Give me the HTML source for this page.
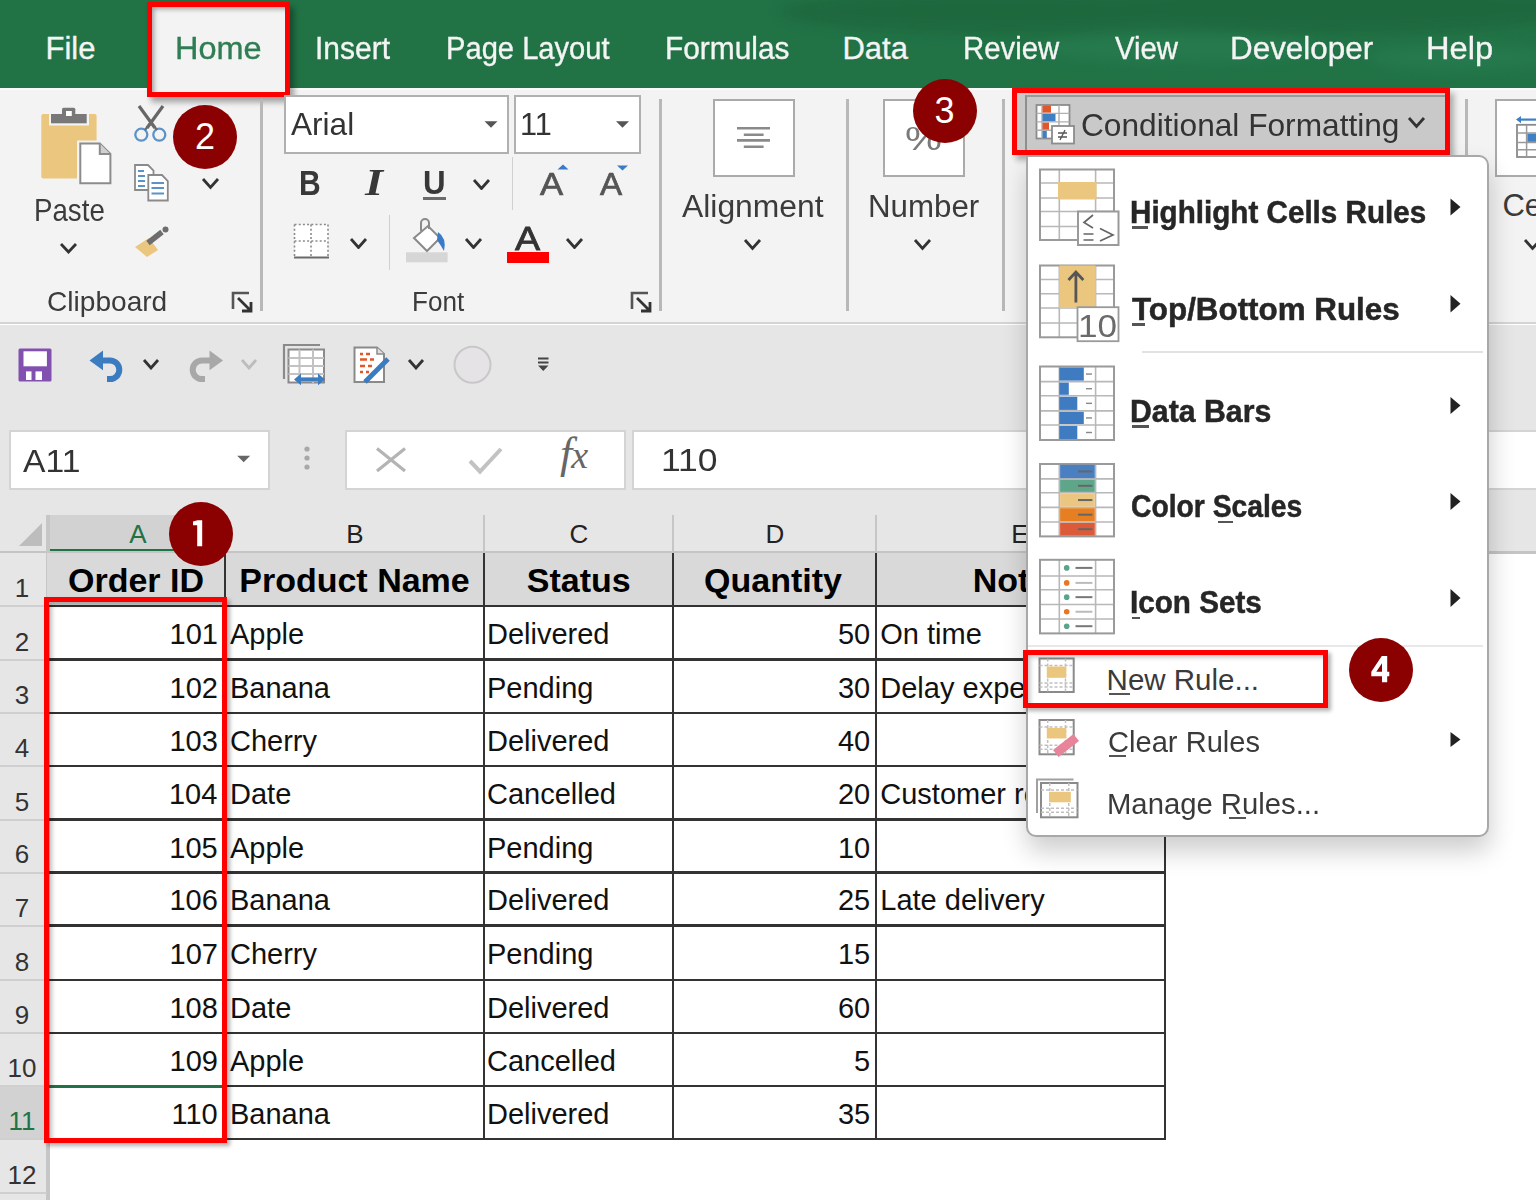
<!DOCTYPE html>
<html><head><meta charset="utf-8"><style>
html,body{margin:0;padding:0;}
body{width:1536px;height:1200px;overflow:hidden;position:relative;background:#fff;font-family:"Liberation Sans",sans-serif;}
body>div,body>svg{position:absolute;box-sizing:border-box;}
.t{white-space:nowrap;}
</style></head><body>
<div style="left:0px;top:0px;width:1536px;height:88px;background:#217346;"></div>
<svg style="left:0;top:0" width="1536" height="1200" viewBox="0 0 1536 1200"><defs><filter id="bl" x="-50%" y="-50%" width="200%" height="200%"><feGaussianBlur stdDeviation="6"/></filter></defs>
<g filter="url(#bl)" opacity="0.5">
<ellipse cx="1000" cy="12" rx="220" ry="22" fill="#1b5e38"/>
<ellipse cx="1330" cy="8" rx="260" ry="26" fill="#1b5e38"/>
<ellipse cx="1180" cy="48" rx="140" ry="14" fill="#2a8052"/>
<ellipse cx="1460" cy="58" rx="90" ry="12" fill="#2a8052"/>
</g></svg>
<div style="left:0px;top:88px;width:1536px;height:235px;background:#f3f3f3;"></div>
<div style="left:0px;top:88px;width:1536px;height:2px;background:#fafafa;"></div>
<div style="left:0px;top:322.3px;width:1536px;height:2.1999999999999886px;background:#d4d4d4;"></div>
<div style="left:0px;top:324.5px;width:1536px;height:228.5px;background:#e6e6e6;"></div>
<div style="left:152px;top:7px;width:133px;height:85px;background:#f3f3f3;box-shadow:inset 4px 4px 5px -2px rgba(0,0,0,.35);"></div>
<div class="t" style="left:45.46px;transform-origin:0 0;top:33.36px;font-size:31px;line-height:31px;font-weight:400;color:#f4f4f4;-webkit-text-stroke:0.35px #f4f4f4;">File</div>
<div class="t" style="left:315.24px;transform-origin:0 0;top:33.36px;font-size:31px;line-height:31px;font-weight:400;color:#f4f4f4;transform:scaleX(0.9669);-webkit-text-stroke:0.35px #f4f4f4;">Insert</div>
<div class="t" style="left:445.61px;transform-origin:0 0;top:33.36px;font-size:31px;line-height:31px;font-weight:400;color:#f4f4f4;transform:scaleX(0.9397);-webkit-text-stroke:0.35px #f4f4f4;">Page Layout</div>
<div class="t" style="left:664.55px;transform-origin:0 0;top:33.36px;font-size:31px;line-height:31px;font-weight:400;color:#f4f4f4;transform:scaleX(0.9638);-webkit-text-stroke:0.35px #f4f4f4;">Formulas</div>
<div class="t" style="left:842.46px;transform-origin:0 0;top:33.36px;font-size:31px;line-height:31px;font-weight:400;color:#f4f4f4;-webkit-text-stroke:0.35px #f4f4f4;">Data</div>
<div class="t" style="left:962.59px;transform-origin:0 0;top:33.36px;font-size:31px;line-height:31px;font-weight:400;color:#f4f4f4;transform:scaleX(0.9476);-webkit-text-stroke:0.35px #f4f4f4;">Review</div>
<div class="t" style="left:1114.88px;transform-origin:0 0;top:33.36px;font-size:31px;line-height:31px;font-weight:400;color:#f4f4f4;transform:scaleX(0.9461);-webkit-text-stroke:0.35px #f4f4f4;">View</div>
<div class="t" style="left:1230.43px;transform-origin:0 0;top:33.36px;font-size:31px;line-height:31px;font-weight:400;color:#f4f4f4;transform:scaleX(1.0126);-webkit-text-stroke:0.35px #f4f4f4;">Developer</div>
<div class="t" style="left:1426.33px;transform-origin:0 0;top:33.36px;font-size:31px;line-height:31px;font-weight:400;color:#f4f4f4;transform:scaleX(1.0513);-webkit-text-stroke:0.35px #f4f4f4;">Help</div>
<div class="t" style="left:174.84px;transform-origin:0 0;top:33.36px;font-size:31px;line-height:31px;font-weight:400;color:#2f7d52;transform:scaleX(1.0473);-webkit-text-stroke:0.35px #2f7d52;">Home</div>
<div style="left:147px;top:2px;width:143px;height:95px;border:5px solid #ff0000;box-shadow:4px 5px 6px rgba(0,0,0,.35);"></div>
<div style="left:259.5px;top:99px;width:3.0px;height:212px;background:#b8b8b8;"></div>
<div style="left:658.5px;top:99px;width:3.0px;height:212px;background:#b8b8b8;"></div>
<div style="left:845.5px;top:99px;width:3.0px;height:212px;background:#b8b8b8;"></div>
<div style="left:1001.5px;top:99px;width:3.0px;height:212px;background:#b8b8b8;"></div>
<div style="left:1464.5px;top:99px;width:3.0px;height:212px;background:#b8b8b8;"></div>
<div style="left:0px;top:515px;width:1536px;height:38px;background:#e6e6e6;"></div>
<div style="left:47px;top:515px;width:178px;height:38px;background:#d2d2d2;"></div>
<div style="left:47px;top:549px;width:178px;height:4px;background:#217346;"></div>
<div style="left:0px;top:551px;width:1536px;height:3px;background:#c4c4c4;"></div>
<div style="left:224px;top:515px;width:2px;height:37px;background:#c6c6c6;"></div>
<div style="left:483px;top:515px;width:2px;height:37px;background:#c6c6c6;"></div>
<div style="left:672px;top:515px;width:2px;height:37px;background:#c6c6c6;"></div>
<div style="left:875px;top:515px;width:2px;height:37px;background:#c6c6c6;"></div>
<div style="left:1164px;top:515px;width:2px;height:37px;background:#c6c6c6;"></div>
<svg style="left:19px;top:523px;" width="24" height="24" viewBox="0 0 24 24"><path d="M23 0 L23 23 L0 23 Z" fill="#bdbdbd"/></svg>
<div class="t" style="left:138.00px;top:521.39px;font-size:26px;line-height:26px;font-weight:400;color:#217346;transform:translateX(-50%) scaleX(1.0000);">A</div>
<div class="t" style="left:355.00px;top:521.39px;font-size:26px;line-height:26px;font-weight:400;color:#222;transform:translateX(-50%) scaleX(1.0000);">B</div>
<div class="t" style="left:579.00px;top:521.39px;font-size:26px;line-height:26px;font-weight:400;color:#222;transform:translateX(-50%) scaleX(1.0000);">C</div>
<div class="t" style="left:775.00px;top:521.39px;font-size:26px;line-height:26px;font-weight:400;color:#222;transform:translateX(-50%) scaleX(1.0000);">D</div>
<div class="t" style="left:1020.00px;top:521.39px;font-size:26px;line-height:26px;font-weight:400;color:#222;transform:translateX(-50%) scaleX(1.0000);">E</div>
<div style="left:0px;top:553px;width:47px;height:647px;background:#e6e6e6;"></div>
<div style="left:0px;top:1086px;width:47px;height:53px;background:#d2d2d2;"></div>
<div style="left:46px;top:515px;width:3.5px;height:685px;background:#c6c6c6;"></div>
<div style="left:0px;top:605px;width:47px;height:2px;background:#cfcfcf;"></div>
<div style="left:0px;top:658.6px;width:47px;height:2.0px;background:#cfcfcf;"></div>
<div style="left:0px;top:712px;width:47px;height:2px;background:#cfcfcf;"></div>
<div style="left:0px;top:765px;width:47px;height:2px;background:#cfcfcf;"></div>
<div style="left:0px;top:818.7px;width:47px;height:2.0px;background:#cfcfcf;"></div>
<div style="left:0px;top:871.5px;width:47px;height:2.0px;background:#cfcfcf;"></div>
<div style="left:0px;top:924.7px;width:47px;height:2.0px;background:#cfcfcf;"></div>
<div style="left:0px;top:978.9px;width:47px;height:2.0px;background:#cfcfcf;"></div>
<div style="left:0px;top:1032px;width:47px;height:2px;background:#cfcfcf;"></div>
<div style="left:0px;top:1085px;width:47px;height:2px;background:#cfcfcf;"></div>
<div style="left:0px;top:1138px;width:47px;height:2px;background:#cfcfcf;"></div>
<div style="left:0px;top:1192px;width:47px;height:2px;background:#cfcfcf;"></div>
<div class="t" style="left:22.00px;top:574.99px;font-size:26px;line-height:26px;font-weight:400;color:#333;transform:translateX(-50%) scaleX(1.0000);">1</div>
<div class="t" style="left:22.00px;top:628.59px;font-size:26px;line-height:26px;font-weight:400;color:#333;transform:translateX(-50%) scaleX(1.0000);">2</div>
<div class="t" style="left:22.00px;top:681.99px;font-size:26px;line-height:26px;font-weight:400;color:#333;transform:translateX(-50%) scaleX(1.0000);">3</div>
<div class="t" style="left:22.00px;top:734.99px;font-size:26px;line-height:26px;font-weight:400;color:#333;transform:translateX(-50%) scaleX(1.0000);">4</div>
<div class="t" style="left:22.00px;top:788.69px;font-size:26px;line-height:26px;font-weight:400;color:#333;transform:translateX(-50%) scaleX(1.0000);">5</div>
<div class="t" style="left:22.00px;top:841.49px;font-size:26px;line-height:26px;font-weight:400;color:#333;transform:translateX(-50%) scaleX(1.0000);">6</div>
<div class="t" style="left:22.00px;top:894.69px;font-size:26px;line-height:26px;font-weight:400;color:#333;transform:translateX(-50%) scaleX(1.0000);">7</div>
<div class="t" style="left:22.00px;top:948.89px;font-size:26px;line-height:26px;font-weight:400;color:#333;transform:translateX(-50%) scaleX(1.0000);">8</div>
<div class="t" style="left:22.00px;top:1001.99px;font-size:26px;line-height:26px;font-weight:400;color:#333;transform:translateX(-50%) scaleX(1.0000);">9</div>
<div class="t" style="left:22.00px;top:1054.99px;font-size:26px;line-height:26px;font-weight:400;color:#333;transform:translateX(-50%) scaleX(1.0000);">10</div>
<div class="t" style="left:22.00px;top:1107.99px;font-size:26px;line-height:26px;font-weight:400;color:#217346;transform:translateX(-50%) scaleX(1.0000);">11</div>
<div class="t" style="left:22.00px;top:1161.99px;font-size:26px;line-height:26px;font-weight:400;color:#333;transform:translateX(-50%) scaleX(1.0000);">12</div>
<div style="left:47px;top:553px;width:1118px;height:53px;background:#d9d9d9;"></div>
<div style="left:47px;top:604.7px;width:1119px;height:2.599999999999909px;background:#333;"></div>
<div style="left:47px;top:658.3000000000001px;width:1119px;height:2.599999999999909px;background:#333;"></div>
<div style="left:47px;top:711.7px;width:1119px;height:2.599999999999909px;background:#333;"></div>
<div style="left:47px;top:764.7px;width:1119px;height:2.599999999999909px;background:#333;"></div>
<div style="left:47px;top:818.4000000000001px;width:1119px;height:2.599999999999909px;background:#333;"></div>
<div style="left:47px;top:871.2px;width:1119px;height:2.599999999999909px;background:#333;"></div>
<div style="left:47px;top:924.4000000000001px;width:1119px;height:2.599999999999909px;background:#333;"></div>
<div style="left:47px;top:978.6px;width:1119px;height:2.599999999999909px;background:#333;"></div>
<div style="left:47px;top:1031.7px;width:1119px;height:2.599999999999909px;background:#333;"></div>
<div style="left:47px;top:1084.7px;width:1119px;height:2.599999999999909px;background:#333;"></div>
<div style="left:47px;top:1137.7px;width:1119px;height:2.599999999999909px;background:#333;"></div>
<div style="left:223.7px;top:553px;width:2.6000000000000227px;height:587px;background:#333;"></div>
<div style="left:482.7px;top:553px;width:2.6000000000000227px;height:587px;background:#333;"></div>
<div style="left:671.7px;top:553px;width:2.599999999999909px;height:587px;background:#333;"></div>
<div style="left:874.7px;top:553px;width:2.599999999999909px;height:587px;background:#333;"></div>
<div style="left:1163.7px;top:553px;width:2.599999999999909px;height:587px;background:#333;"></div>
<div class="t" style="left:136.00px;top:562.72px;font-size:34px;line-height:34px;font-weight:700;color:#000;transform:translateX(-50%) scaleX(1.0000);">Order ID</div>
<div class="t" style="left:354.50px;top:562.72px;font-size:34px;line-height:34px;font-weight:700;color:#000;transform:translateX(-50%) scaleX(1.0000);">Product Name</div>
<div class="t" style="left:578.80px;top:562.72px;font-size:34px;line-height:34px;font-weight:700;color:#000;transform:translateX(-50%) scaleX(1.0000);">Status</div>
<div class="t" style="left:773.00px;top:562.72px;font-size:34px;line-height:34px;font-weight:700;color:#000;transform:translateX(-50%) scaleX(1.0000);">Quantity</div>
<div class="t" style="left:1020.00px;top:562.72px;font-size:34px;line-height:34px;font-weight:700;color:#000;transform:translateX(-50%) scaleX(1.0000);">Notes</div>
<div class="t" style="right:1318.07px;transform-origin:100% 0;top:619.95px;font-size:29px;line-height:29px;font-weight:400;color:#111;">101</div>
<div class="t" style="left:230.00px;transform-origin:0 0;top:619.95px;font-size:29px;line-height:29px;font-weight:400;color:#111;">Apple</div>
<div class="t" style="left:487.00px;transform-origin:0 0;top:619.95px;font-size:29px;line-height:29px;font-weight:400;color:#111;">Delivered</div>
<div class="t" style="right:665.86px;transform-origin:100% 0;top:619.95px;font-size:29px;line-height:29px;font-weight:400;color:#111;">50</div>
<div class="t" style="left:880.30px;transform-origin:0 0;top:619.95px;font-size:29px;line-height:29px;font-weight:400;color:#111;">On time</div>
<div class="t" style="right:1318.04px;transform-origin:100% 0;top:673.55px;font-size:29px;line-height:29px;font-weight:400;color:#111;">102</div>
<div class="t" style="left:230.00px;transform-origin:0 0;top:673.55px;font-size:29px;line-height:29px;font-weight:400;color:#111;">Banana</div>
<div class="t" style="left:487.00px;transform-origin:0 0;top:673.55px;font-size:29px;line-height:29px;font-weight:400;color:#111;">Pending</div>
<div class="t" style="right:665.86px;transform-origin:100% 0;top:673.55px;font-size:29px;line-height:29px;font-weight:400;color:#111;">30</div>
<div class="t" style="left:880.30px;transform-origin:0 0;top:673.55px;font-size:29px;line-height:29px;font-weight:400;color:#111;">Delay expected</div>
<div class="t" style="right:1318.21px;transform-origin:100% 0;top:726.95px;font-size:29px;line-height:29px;font-weight:400;color:#111;">103</div>
<div class="t" style="left:230.00px;transform-origin:0 0;top:726.95px;font-size:29px;line-height:29px;font-weight:400;color:#111;">Cherry</div>
<div class="t" style="left:487.00px;transform-origin:0 0;top:726.95px;font-size:29px;line-height:29px;font-weight:400;color:#111;">Delivered</div>
<div class="t" style="right:665.86px;transform-origin:100% 0;top:726.95px;font-size:29px;line-height:29px;font-weight:400;color:#111;">40</div>
<div class="t" style="right:1318.65px;transform-origin:100% 0;top:779.95px;font-size:29px;line-height:29px;font-weight:400;color:#111;">104</div>
<div class="t" style="left:230.00px;transform-origin:0 0;top:779.95px;font-size:29px;line-height:29px;font-weight:400;color:#111;">Date</div>
<div class="t" style="left:487.00px;transform-origin:0 0;top:779.95px;font-size:29px;line-height:29px;font-weight:400;color:#111;">Cancelled</div>
<div class="t" style="right:665.86px;transform-origin:100% 0;top:779.95px;font-size:29px;line-height:29px;font-weight:400;color:#111;">20</div>
<div class="t" style="left:880.30px;transform-origin:0 0;top:779.95px;font-size:29px;line-height:29px;font-weight:400;color:#111;">Customer request</div>
<div class="t" style="right:1318.27px;transform-origin:100% 0;top:833.65px;font-size:29px;line-height:29px;font-weight:400;color:#111;">105</div>
<div class="t" style="left:230.00px;transform-origin:0 0;top:833.65px;font-size:29px;line-height:29px;font-weight:400;color:#111;">Apple</div>
<div class="t" style="left:487.00px;transform-origin:0 0;top:833.65px;font-size:29px;line-height:29px;font-weight:400;color:#111;">Pending</div>
<div class="t" style="right:665.86px;transform-origin:100% 0;top:833.65px;font-size:29px;line-height:29px;font-weight:400;color:#111;">10</div>
<div class="t" style="right:1318.21px;transform-origin:100% 0;top:886.45px;font-size:29px;line-height:29px;font-weight:400;color:#111;">106</div>
<div class="t" style="left:230.00px;transform-origin:0 0;top:886.45px;font-size:29px;line-height:29px;font-weight:400;color:#111;">Banana</div>
<div class="t" style="left:487.00px;transform-origin:0 0;top:886.45px;font-size:29px;line-height:29px;font-weight:400;color:#111;">Delivered</div>
<div class="t" style="right:665.77px;transform-origin:100% 0;top:886.45px;font-size:29px;line-height:29px;font-weight:400;color:#111;">25</div>
<div class="t" style="left:880.30px;transform-origin:0 0;top:886.45px;font-size:29px;line-height:29px;font-weight:400;color:#111;">Late delivery</div>
<div class="t" style="right:1318.04px;transform-origin:100% 0;top:939.65px;font-size:29px;line-height:29px;font-weight:400;color:#111;">107</div>
<div class="t" style="left:230.00px;transform-origin:0 0;top:939.65px;font-size:29px;line-height:29px;font-weight:400;color:#111;">Cherry</div>
<div class="t" style="left:487.00px;transform-origin:0 0;top:939.65px;font-size:29px;line-height:29px;font-weight:400;color:#111;">Pending</div>
<div class="t" style="right:665.77px;transform-origin:100% 0;top:939.65px;font-size:29px;line-height:29px;font-weight:400;color:#111;">15</div>
<div class="t" style="right:1318.24px;transform-origin:100% 0;top:993.85px;font-size:29px;line-height:29px;font-weight:400;color:#111;">108</div>
<div class="t" style="left:230.00px;transform-origin:0 0;top:993.85px;font-size:29px;line-height:29px;font-weight:400;color:#111;">Date</div>
<div class="t" style="left:487.00px;transform-origin:0 0;top:993.85px;font-size:29px;line-height:29px;font-weight:400;color:#111;">Delivered</div>
<div class="t" style="right:665.86px;transform-origin:100% 0;top:993.85px;font-size:29px;line-height:29px;font-weight:400;color:#111;">60</div>
<div class="t" style="right:1318.12px;transform-origin:100% 0;top:1046.95px;font-size:29px;line-height:29px;font-weight:400;color:#111;">109</div>
<div class="t" style="left:230.00px;transform-origin:0 0;top:1046.95px;font-size:29px;line-height:29px;font-weight:400;color:#111;">Apple</div>
<div class="t" style="left:487.00px;transform-origin:0 0;top:1046.95px;font-size:29px;line-height:29px;font-weight:400;color:#111;">Cancelled</div>
<div class="t" style="right:665.78px;transform-origin:100% 0;top:1046.95px;font-size:29px;line-height:29px;font-weight:400;color:#111;">5</div>
<div class="t" style="right:1318.36px;transform-origin:100% 0;top:1099.95px;font-size:29px;line-height:29px;font-weight:400;color:#111;">110</div>
<div class="t" style="left:230.00px;transform-origin:0 0;top:1099.95px;font-size:29px;line-height:29px;font-weight:400;color:#111;">Banana</div>
<div class="t" style="left:487.00px;transform-origin:0 0;top:1099.95px;font-size:29px;line-height:29px;font-weight:400;color:#111;">Delivered</div>
<div class="t" style="right:665.77px;transform-origin:100% 0;top:1099.95px;font-size:29px;line-height:29px;font-weight:400;color:#111;">35</div>
<div style="left:47px;top:1085px;width:178px;height:3px;background:#217346;"></div>
<div style="left:44px;top:597px;width:183px;height:546px;border:5px solid #ff0000;box-shadow:3px 3px 4px rgba(0,0,0,.3), inset 3px 3px 4px rgba(0,0,0,.25);"></div>
<svg style="left:0;top:0" width="1536" height="1200" viewBox="0 0 1536 1200">
<rect x="41.3" y="114" width="55.3" height="64.6" rx="2" fill="#ebc67e"/>
<rect x="49" y="112" width="40" height="13.5" fill="#f3f3f3"/>
<rect x="60" y="105.5" width="17.5" height="9" fill="#f3f3f3"/>
<rect x="51" y="114" width="35.7" height="9.3" fill="#787878"/>
<rect x="62" y="107.7" width="13.3" height="8" rx="1.5" fill="#787878"/>
<rect x="66" y="111" width="5.8" height="5" fill="#ffffff"/>
<rect x="77" y="140.5" width="36.5" height="46" fill="#f3f3f3"/>
<path d="M80.3 143.4 H99.8 L110.4 154 V183.2 H80.3 Z" fill="#fff" stroke="#8c8c8c" stroke-width="2"/>
<path d="M99.8 143.4 V154 H110.4" fill="#d0d0d0" stroke="#8c8c8c" stroke-width="2"/>
</svg>
<div class="t" style="left:34.13px;transform-origin:0 0;top:193.91px;font-size:32px;line-height:32px;font-weight:400;color:#3b3b3b;transform:scaleX(0.8651);">Paste</div>
<svg style="left:59.3px;top:242.4px;" width="19" height="12" viewBox="0 0 19 12"><path d="M2 2 L9.5 10 L17 2" fill="none" stroke="#333" stroke-width="2.8"/></svg>
<svg style="left:0;top:0" width="1536" height="1200" viewBox="0 0 1536 1200">
<path d="M139 106 L155 128 M163 106 L147 128" stroke="#666" stroke-width="3.2" fill="none"/>
<circle cx="141.3" cy="134.7" r="6" fill="none" stroke="#5b93c9" stroke-width="2.3"/>
<circle cx="159.3" cy="134.7" r="6" fill="none" stroke="#5b93c9" stroke-width="2.3"/>
<path d="M145 130 L151 122 L157 130" stroke="#6a6a6a" stroke-width="2.2" fill="none"/>
</svg>
<svg style="left:0;top:0" width="1536" height="1200" viewBox="0 0 1536 1200">
<path d="M135 165 H148 L153.5 170.5 V190 H135 Z" fill="#fff" stroke="#8a8a8a" stroke-width="1.8"/>
<path d="M138 171 H144 M138 176 H145 M138 181 H145 M138 186 H145" stroke="#5b93c9" stroke-width="1.8"/>
<path d="M148.3 175 H162 L167.8 181 V200.5 H148.3 Z" fill="#fff" stroke="#8a8a8a" stroke-width="1.8"/>
<path d="M151.5 183 H164 M151.5 188 H164 M151.5 193.5 H164" stroke="#5b93c9" stroke-width="1.8"/>
</svg>
<svg style="left:0;top:0" width="1536" height="1200" viewBox="0 0 1536 1200">
<path d="M135 247 L149 238 L158 250 L147 257 Z" fill="#ebc67e"/>
<path d="M148 243 L162 232" stroke="#6d6d6d" stroke-width="5.5"/>
<circle cx="165.5" cy="229.5" r="3" fill="#6d6d6d"/>
</svg>
<svg style="left:200.5px;top:177.3px;" width="19" height="12.5" viewBox="0 0 19 12.5"><path d="M2 2 L9.5 10.5 L17 2" fill="none" stroke="#333" stroke-width="2.8"/></svg>
<div class="t" style="left:46.57px;transform-origin:0 0;top:287.72px;font-size:27.5px;line-height:27.5px;font-weight:400;color:#3b3b3b;transform:scaleX(1.0215);">Clipboard</div>
<svg style="left:0;top:0" width="1536" height="1200" viewBox="0 0 1536 1200"><path d="M233 309 V293 H249" fill="none" stroke="#555" stroke-width="2.6"/>
<path d="M238 298 L250 310 M242 311 H251 V302" fill="none" stroke="#333" stroke-width="2.8"/></svg>
<div style="left:284px;top:95px;width:225px;height:59px;background:#fff;border:2px solid #b0b0b0;"></div>
<div style="left:514px;top:95px;width:127px;height:59px;background:#fff;border:2px solid #b0b0b0;"></div>
<div class="t" style="left:290.94px;transform-origin:0 0;top:108.31px;font-size:32px;line-height:32px;font-weight:400;color:#333;transform:scaleX(0.9872);">Arial</div>
<div class="t" style="left:519.67px;transform-origin:0 0;top:108.31px;font-size:32px;line-height:32px;font-weight:400;color:#333;transform:scaleX(0.9584);">11</div>
<svg style="left:0;top:0" width="1536" height="1200" viewBox="0 0 1536 1200"><path d="M484.5 121.25 H497.5 L491 127.75 Z" fill="#555"/></svg>
<svg style="left:0;top:0" width="1536" height="1200" viewBox="0 0 1536 1200"><path d="M616.0 121.25 H629.0 L622.5 127.75 Z" fill="#555"/></svg>
<div class="t" style="left:298.99px;transform-origin:0 0;top:165.17px;font-size:35px;line-height:35px;font-weight:700;color:#383838;transform:scaleX(0.8571);">B</div>
<div class="t" style="left:365px;top:164px;font-size:37px;line-height:37px;font-family:'Liberation Serif',serif;font-weight:700;font-style:italic;color:#383838;transform:scaleX(1.25);transform-origin:0 0;">I</div>
<div class="t" style="left:422.82px;transform-origin:0 0;top:165.22px;font-size:34px;line-height:34px;font-weight:700;color:#383838;transform:scaleX(0.9200);">U</div>
<div style="left:423px;top:196.6px;width:23px;height:3.0px;background:#6b6b6b;"></div>
<svg style="left:472.0px;top:177.5px;" width="19" height="12.5" viewBox="0 0 19 12.5"><path d="M2 2 L9.5 10.5 L17 2" fill="none" stroke="#333" stroke-width="2.8"/></svg>
<div style="left:511.5px;top:157px;width:1.5px;height:53px;background:#d0d0d0;"></div>
<div class="t" style="left:539.93px;transform-origin:0 0;top:168.41px;font-size:32px;line-height:32px;font-weight:400;color:#555;transform:scaleX(1.0841);-webkit-text-stroke:0.7px #555;">A</div>
<div class="t" style="left:599.93px;transform-origin:0 0;top:168.41px;font-size:32px;line-height:32px;font-weight:400;color:#555;transform:scaleX(1.0370);-webkit-text-stroke:0.7px #555;">A</div>
<svg style="left:0;top:0" width="1536" height="1200" viewBox="0 0 1536 1200"><path d="M557.5 169.5 L563 164.5 L568.5 169.5 Z" fill="#3a7bc8"/><path d="M617 165.5 H628 L622.5 170.5 Z" fill="#3a7bc8"/></svg>
<svg style="left:0;top:0" width="1536" height="1200" viewBox="0 0 1536 1200"><rect x="294.5" y="224.5" width="33.5" height="33" fill="#fff"/>
<path d="M294.5 224.5 H328 V257 M294.5 224.5 V257 M311 224.5 V257 M294.5 241 H328" fill="none" stroke="#8a8a8a" stroke-width="1.6" stroke-dasharray="2 2.2"/>
<path d="M294 257.5 H329" stroke="#6a6a6a" stroke-width="2.2"/></svg>
<svg style="left:349.0px;top:236.8px;" width="19" height="12.5" viewBox="0 0 19 12.5"><path d="M2 2 L9.5 10.5 L17 2" fill="none" stroke="#333" stroke-width="2.8"/></svg>
<div style="left:388.5px;top:215px;width:1.5px;height:55px;background:#d0d0d0;"></div>
<svg style="left:0;top:0" width="1536" height="1200" viewBox="0 0 1536 1200"><rect x="406" y="252.3" width="41.6" height="10" fill="#d6d6d6"/>
<path d="M414 238 L428 226 L440 238 L427 251 Z" fill="#fff" stroke="#8a8a8a" stroke-width="2"/>
<path d="M421 231 V223 A4 4 0 0 1 429 223 V229" fill="none" stroke="#8a8a8a" stroke-width="2"/>
<path d="M438 232 Q447 238 444 251 Q440 244 437 240 Z" fill="#3a7bc8"/></svg>
<svg style="left:463.5px;top:236.8px;" width="19" height="12.5" viewBox="0 0 19 12.5"><path d="M2 2 L9.5 10.5 L17 2" fill="none" stroke="#333" stroke-width="2.8"/></svg>
<div class="t" style="left:514.92px;transform-origin:0 0;top:220.82px;font-size:34px;line-height:34px;font-weight:400;color:#333;transform:scaleX(1.1090);-webkit-text-stroke:0.8px #333;">A</div>
<div style="left:507px;top:252.3px;width:42px;height:10.699999999999989px;background:#ff0000;"></div>
<svg style="left:564.5px;top:236.8px;" width="19" height="12.5" viewBox="0 0 19 12.5"><path d="M2 2 L9.5 10.5 L17 2" fill="none" stroke="#333" stroke-width="2.8"/></svg>
<div class="t" style="left:412.16px;transform-origin:0 0;top:288.32px;font-size:27.5px;line-height:27.5px;font-weight:400;color:#3b3b3b;transform:scaleX(0.9490);">Font</div>
<svg style="left:0;top:0" width="1536" height="1200" viewBox="0 0 1536 1200"><path d="M632 309 V293 H648" fill="none" stroke="#555" stroke-width="2.6"/>
<path d="M637 298 L649 310 M641 311 H650 V302" fill="none" stroke="#333" stroke-width="2.8"/></svg>
<div style="left:713px;top:99px;width:82px;height:78px;background:#fff;border:2px solid #aaa;"></div>
<svg style="left:0;top:0" width="1536" height="1200" viewBox="0 0 1536 1200"><path d="M737 128.2 H770 M743.8 134.7 H763.6 M737 140.4 H770 M743.8 146.7 H763.6" stroke="#8a8a8a" stroke-width="2.6"/></svg>
<div class="t" style="left:681.94px;transform-origin:0 0;top:191.06px;font-size:31px;line-height:31px;font-weight:400;color:#3b3b3b;transform:scaleX(1.0271);">Alignment</div>
<svg style="left:742.5px;top:238px;" width="19" height="12.5" viewBox="0 0 19 12.5"><path d="M2 2 L9.5 10.5 L17 2" fill="none" stroke="#333" stroke-width="2.8"/></svg>
<div style="left:883px;top:99px;width:82px;height:78px;background:#fff;border:2px solid #aaa;"></div>
<div class="t" style="left:904.50px;transform-origin:0 0;top:121.22px;font-size:34px;line-height:34px;font-weight:400;color:#7a7a7a;transform:scaleX(1.2225);">%</div>
<div class="t" style="left:868.43px;transform-origin:0 0;top:191.06px;font-size:31px;line-height:31px;font-weight:400;color:#3b3b3b;transform:scaleX(1.0091);">Number</div>
<svg style="left:913.2px;top:238px;" width="19" height="12.5" viewBox="0 0 19 12.5"><path d="M2 2 L9.5 10.5 L17 2" fill="none" stroke="#333" stroke-width="2.8"/></svg>
<div style="left:1017px;top:93px;width:428px;height:57px;background:#c9c9c9;"></div>
<div style="left:1025px;top:95px;width:422px;height:57px;border-left:2px solid #8e8e8e;border-top:2px solid #9a9a9a;"></div>
<svg style="left:0;top:0" width="1536" height="1200" viewBox="0 0 1536 1200"><rect x="1036.5" y="105" width="33" height="33.5" fill="#fff" stroke="#8c8c8c" stroke-width="1.8"/>
<path d="M1036.5 113.4 H1069.5 M1036.5 121.9 H1069.5 M1036.5 130.3 H1069.5 M1042 105 V138.5 M1059 105 V138.5" stroke="#b0b0b0" stroke-width="1.4"/>
<rect x="1042.5" y="105.6" width="8.5" height="7" fill="#e1572a"/>
<rect x="1042.5" y="114" width="13" height="7.2" fill="#3f7fc4"/>
<rect x="1042.5" y="122.6" width="6.5" height="7" fill="#e1572a"/>
<rect x="1042.5" y="131" width="4.3" height="7" fill="#3f7fc4"/>
<rect x="1052" y="126" width="22" height="17.5" fill="#fff" stroke="#8c8c8c" stroke-width="1.8"/>
<path d="M1058 133 H1067 M1058 137 H1067 M1065 130 L1060 140" stroke="#555" stroke-width="1.3"/></svg>
<div class="t" style="left:1081.39px;transform-origin:0 0;top:108.71px;font-size:32px;line-height:32px;font-weight:400;color:#333;transform:scaleX(0.9892);">Conditional Formatting</div>
<svg style="left:1406.5px;top:116px;" width="19" height="12.5" viewBox="0 0 19 12.5"><path d="M2 2 L9.5 10.5 L17 2" fill="none" stroke="#333" stroke-width="2.8"/></svg>
<div style="left:1495px;top:99px;width:65px;height:78px;background:#fff;border:2px solid #aaa;"></div>
<svg style="left:0;top:0" width="1536" height="1200" viewBox="0 0 1536 1200"><path d="M1520 119.6 H1536" stroke="#3f7fc4" stroke-width="2.2"/><path d="M1516 119.6 L1521 116 V123.2 Z" fill="#3f7fc4"/>
<rect x="1517" y="124.8" width="30" height="32.2" fill="#fff" stroke="#8a8a8a" stroke-width="1.8"/>
<path d="M1517 133 H1536 M1517 142.5 H1536 M1517 149.8 H1536 M1526.6 124.8 V157" stroke="#9a9a9a" stroke-width="1.5"/>
<rect x="1527.4" y="133.8" width="9" height="8" fill="#3f7fc4"/></svg>
<div class="t" style="left:1502.42px;transform-origin:0 0;top:189.76px;font-size:31px;line-height:31px;font-weight:400;color:#3b3b3b;">Ce</div>
<svg style="left:1522.5px;top:238px;" width="19" height="12.5" viewBox="0 0 19 12.5"><path d="M2 2 L9.5 10.5 L17 2" fill="none" stroke="#333" stroke-width="2.8"/></svg>
<div style="left:1012px;top:88px;width:438px;height:67px;border:5px solid #ff0000;box-shadow:4px 5px 6px rgba(0,0,0,.3);"></div>
<svg style="left:0;top:0" width="1536" height="1200" viewBox="0 0 1536 1200"><rect x="18.5" y="348.5" width="33" height="33" rx="1.5" fill="#8250ae"/>
<rect x="23.5" y="351.3" width="23.4" height="15" fill="#fff"/>
<rect x="26" y="371.4" width="5.5" height="8.6" fill="#fff"/><rect x="35.5" y="371.4" width="6.5" height="8.6" fill="#fff"/>
<path d="M102 360.4 H110 A9.3 9.3 0 0 1 110 379 H107" fill="none" stroke="#3b7bc0" stroke-width="6"/>
<path d="M89.5 360.4 L103 350.5 V370.3 Z" fill="#3b7bc0"/>
<path d="M210 360.4 H202 A9.3 9.3 0 0 0 202 379 H205" fill="none" stroke="#a8a8a8" stroke-width="6"/>
<path d="M223 360.4 L209.5 350.5 V370.3 Z" fill="#a8a8a8"/>
</svg>
<svg style="left:141.5px;top:357.8px;" width="18" height="12" viewBox="0 0 18 12"><path d="M2 2 L9.0 10 L16 2" fill="none" stroke="#333" stroke-width="2.8"/></svg>
<svg style="left:240.0px;top:357.8px;" width="18" height="12" viewBox="0 0 18 12"><path d="M2 2 L9.0 10 L16 2" fill="none" stroke="#bdbdbd" stroke-width="2.8"/></svg>
<svg style="left:0;top:0" width="1536" height="1200" viewBox="0 0 1536 1200"><path d="M284 379 V345 H320" fill="none" stroke="#8a8a8a" stroke-width="2.2"/>
<rect x="288.5" y="349.5" width="35.5" height="33" fill="#fff" stroke="#8a8a8a" stroke-width="2"/>
<path d="M288.5 358 H324 M288.5 366 H324 M288.5 374 H324 M299.5 349.5 V383 M313 349.5 V383" stroke="#c2c2c2" stroke-width="2"/>
<path d="M300 379.4 H319" stroke="#3b7bc0" stroke-width="4"/>
<path d="M294 379.4 L301 373.5 V385.3 Z M325 379.4 L318 373.5 V385.3 Z" fill="#3b7bc0"/>
<path d="M354.5 347.5 H377 L384 354 V382 H354.5 Z" fill="#fff" stroke="#8a8a8a" stroke-width="2"/>
<path d="M377 347.5 V354 H384" fill="#e0e0e0" stroke="#8a8a8a" stroke-width="1.5"/>
<path d="M360 354 H363 M366 354 H370 M360 359.5 H367 M370 359.5 H374 M360 366 H365 M368 366 H372 M360 372 H363 M366 372 H369" stroke="#e1572a" stroke-width="2.5"/>
<path d="M365 382 L388 359" stroke="#3b7bc0" stroke-width="5"/>
<circle cx="472.5" cy="364.7" r="18" fill="#e5e3e5" stroke="#c8c8c8" stroke-width="2"/>
<path d="M538 358.5 H548.5 M538 362.5 H548.5" stroke="#444" stroke-width="2"/>
<path d="M538 365.5 H548.5 L543.25 371 Z" fill="#444"/>
</svg>
<svg style="left:407.0px;top:357.8px;" width="18" height="12" viewBox="0 0 18 12"><path d="M2 2 L9.0 10 L16 2" fill="none" stroke="#333" stroke-width="2.8"/></svg>
<div style="left:9px;top:429.5px;width:260.5px;height:60.5px;background:#fff;border:2px solid #d4d4d4;"></div>
<div class="t" style="left:22.93px;transform-origin:0 0;top:445.76px;font-size:31px;line-height:31px;font-weight:400;color:#333;transform:scaleX(1.0863);">A11</div>
<svg style="left:0;top:0" width="1536" height="1200" viewBox="0 0 1536 1200"><path d="M237.2 455.75 H250.2 L243.7 462.25 Z" fill="#666"/></svg>
<svg style="left:0;top:0" width="1536" height="1200" viewBox="0 0 1536 1200"><circle cx="307" cy="449" r="2.6" fill="#a8a8a8"/><circle cx="307" cy="458" r="2.6" fill="#a8a8a8"/><circle cx="307" cy="467" r="2.6" fill="#a8a8a8"/></svg>
<div style="left:345.3px;top:429.5px;width:280.99999999999994px;height:60.5px;background:#fff;border:2px solid #d4d4d4;"></div>
<svg style="left:0;top:0" width="1536" height="1200" viewBox="0 0 1536 1200"><path d="M377 448.5 L405 471 M405 448.5 L377 471" stroke="#b4b4b4" stroke-width="3.2"/>
<path d="M470 461 L480 471.5 L501 449" fill="none" stroke="#c2c2c2" stroke-width="4"/></svg>
<div class="t" style="left:560px;top:432px;font-size:44px;line-height:44px;font-family:'Liberation Serif',serif;font-style:italic;color:#666;letter-spacing:-1px;">f<span style="font-size:38px;">x</span></div>
<div style="left:632.3px;top:429.5px;width:927.7px;height:60.5px;background:#fff;border:2px solid #d4d4d4;"></div>
<div class="t" style="left:660.80px;transform-origin:0 0;top:444.56px;font-size:31px;line-height:31px;font-weight:400;color:#333;transform:scaleX(1.1451);">110</div>
<div style="left:1026px;top:155px;width:463px;height:682px;background:#fff;border:2.4px solid #a8a8a8;border-radius:0 10px 10px 10px;box-shadow:1px 14px 26px rgba(0,0,0,.2);"></div>
<svg style="left:0;top:0" width="1536" height="1200" viewBox="0 0 1536 1200"><rect x="1040" y="169.5" width="74" height="70.5" fill="#fff"/><path d="M1059.3 169.5 V240 M1095.6 169.5 V240 M1040 183 H1114 M1040 198 H1114 M1040 211.5 H1114 M1040 226.5 H1114 " stroke="#b8b8b8" stroke-width="1.6"/><rect x="1040" y="169.5" width="74" height="70.5" fill="none" stroke="#9a9a9a" stroke-width="2"/><rect x="1058" y="182" width="38.5" height="17.5" fill="#ebc67e"/><rect x="1078" y="211.5" width="40.5" height="33.5" fill="#fff" stroke="#9a9a9a" stroke-width="2"/><path d="M1093 215 L1084 222.5 L1093 228 M1083.5 234 H1093.5 M1083.5 240 H1093.5 M1100 228.5 L1113 235 L1100 241" fill="none" stroke="#666" stroke-width="1.7"/></svg>
<svg style="left:0;top:0" width="1536" height="1200" viewBox="0 0 1536 1200"><rect x="1040" y="265.5" width="74" height="71.80000000000001" fill="#fff"/><path d="M1059.3 265.5 V337.3 M1095.6 265.5 V337.3 M1040 279.5 H1114 M1040 293.8 H1114 M1040 308 H1114 M1040 323 H1114 " stroke="#b8b8b8" stroke-width="1.6"/><rect x="1040" y="265.5" width="74" height="71.80000000000001" fill="none" stroke="#9a9a9a" stroke-width="2"/><rect x="1059.3" y="265.5" width="36.4" height="42.5" fill="#ebc67e"/><path d="M1075.9 302.5 V273 M1068.5 280 L1075.9 272 L1083.3 280" fill="none" stroke="#555" stroke-width="2.8"/><rect x="1077.5" y="307.2" width="41" height="34" fill="#fff" stroke="#9a9a9a" stroke-width="1.8"/></svg>
<div class="t" style="left:1077.83px;transform-origin:0 0;top:311.26px;font-size:31px;line-height:31px;font-weight:400;color:#6a6a6a;transform:scaleX(1.1324);">10</div>
<svg style="left:0;top:0" width="1536" height="1200" viewBox="0 0 1536 1200"><rect x="1040" y="366.5" width="74" height="73.5" fill="#fff"/><path d="M1059.3 366.5 V440 M1095.6 366.5 V440 M1040 381.6 H1114 M1040 395.8 H1114 M1040 410.9 H1114 M1040 425 H1114 " stroke="#b8b8b8" stroke-width="1.6"/><rect x="1040" y="366.5" width="74" height="73.5" fill="none" stroke="#9a9a9a" stroke-width="2"/><rect x="1059.3" y="367.5" width="24.5" height="13.100000000000023" fill="#3f7bc1"/><path d="M1086 374.05 H1092" stroke="#888" stroke-width="1.4"/><rect x="1059.3" y="382.6" width="9.5" height="12.199999999999989" fill="#3f7bc1"/><path d="M1086 388.70000000000005 H1092" stroke="#888" stroke-width="1.4"/><rect x="1059.3" y="396.8" width="18" height="13.099999999999966" fill="#3f7bc1"/><path d="M1086 403.35 H1092" stroke="#888" stroke-width="1.4"/><rect x="1059.3" y="411.9" width="24.5" height="12.100000000000023" fill="#3f7bc1"/><path d="M1086 417.95 H1092" stroke="#888" stroke-width="1.4"/><rect x="1059.3" y="426" width="18" height="13" fill="#3f7bc1"/><path d="M1086 432.5 H1092" stroke="#888" stroke-width="1.4"/></svg>
<svg style="left:0;top:0" width="1536" height="1200" viewBox="0 0 1536 1200"><rect x="1040" y="464" width="74" height="72.39999999999998" fill="#fff"/><path d="M1059.3 464 V536.4 M1095.6 464 V536.4 M1040 478.9 H1114 M1040 492.7 H1114 M1040 507.4 H1114 M1040 522 H1114 " stroke="#b8b8b8" stroke-width="1.6"/><rect x="1040" y="464" width="74" height="72.39999999999998" fill="none" stroke="#9a9a9a" stroke-width="2"/><rect x="1060.1" y="464.8" width="34.69999999999995" height="13.299999999999978" fill="#4a7fc1"/><path d="M1078 471.45 H1092.4" stroke="#666" stroke-width="2"/><rect x="1060.1" y="479.7" width="34.69999999999995" height="12.200000000000012" fill="#5fa58a"/><path d="M1078 485.79999999999995 H1092.4" stroke="#666" stroke-width="2"/><rect x="1060.1" y="493.5" width="34.69999999999995" height="13.099999999999989" fill="#ebc680"/><path d="M1078 500.04999999999995 H1092.4" stroke="#666" stroke-width="2"/><rect x="1060.1" y="508.2" width="34.69999999999995" height="13.000000000000023" fill="#e67e22"/><path d="M1078 514.7 H1092.4" stroke="#666" stroke-width="2"/><rect x="1060.1" y="522.8" width="34.69999999999995" height="12.799999999999978" fill="#dc5a37"/><path d="M1078 529.2 H1092.4" stroke="#666" stroke-width="2"/></svg>
<svg style="left:0;top:0" width="1536" height="1200" viewBox="0 0 1536 1200"><rect x="1040" y="559.8" width="74" height="73.60000000000002" fill="#fff"/><path d="M1059.3 559.8 V633.4 M1095.6 559.8 V633.4 M1040 576 H1114 M1040 589.8 H1114 M1040 604.5 H1114 M1040 619 H1114 " stroke="#b8b8b8" stroke-width="1.6"/><rect x="1040" y="559.8" width="74" height="73.60000000000002" fill="none" stroke="#9a9a9a" stroke-width="2"/><circle cx="1066.7" cy="567.9" r="2.8" fill="#5aa58a"/><path d="M1075.5 567.9 H1092.4" stroke="#777" stroke-width="2"/><circle cx="1066.7" cy="582.9" r="2.8" fill="#e87722"/><path d="M1075.5 582.9 H1092.4" stroke="#bbb" stroke-width="2"/><circle cx="1066.7" cy="597.15" r="2.8" fill="#5aa58a"/><path d="M1075.5 597.15 H1092.4" stroke="#777" stroke-width="2"/><circle cx="1066.7" cy="611.75" r="2.8" fill="#e87722"/><path d="M1075.5 611.75 H1092.4" stroke="#bbb" stroke-width="2"/><circle cx="1066.7" cy="626.2" r="2.8" fill="#5aa58a"/><path d="M1075.5 626.2 H1092.4" stroke="#777" stroke-width="2"/></svg>
<div style="left:1142px;top:351px;width:340.5px;height:1.5px;background:#e2e2e2;"></div>
<div style="left:1028px;top:645px;width:454.5px;height:2px;background:#e8e8e8;"></div>
<svg style="left:0;top:0" width="1536" height="1200" viewBox="0 0 1536 1200"><rect x="1039.5" y="658.5" width="34.200000000000045" height="33.5" fill="#fff" stroke="#8a8a8a" stroke-width="2"/><path d="M1047.708 658.5 V692 M1065.492 658.5 V692 M1039.5 665.5 H1073.7 M1039.5 683 H1073.7 M1039.5 687 H1073.7" stroke="#c0c0c0" stroke-width="1.5" stroke-dasharray="3 2"/><rect x="1046.8" y="666.5" width="19.5" height="11.299999999999955" fill="#ebc67e"/></svg>
<svg style="left:0;top:0" width="1536" height="1200" viewBox="0 0 1536 1200"><rect x="1039.5" y="720" width="34.200000000000045" height="34.299999999999955" fill="#fff" stroke="#8a8a8a" stroke-width="2"/><path d="M1047.708 720 V754.3 M1065.492 720 V754.3 M1039.5 727 H1073.7 M1039.5 745.3 H1073.7 M1039.5 749.3 H1073.7" stroke="#c0c0c0" stroke-width="1.5" stroke-dasharray="3 2"/><rect x="1046.8" y="728" width="19.5" height="10.5" fill="#ebc67e"/><rect x="1053" y="741" width="26" height="9" transform="rotate(-38 1066 745.5)" fill="#e8849a"/></svg>
<svg style="left:0;top:0" width="1536" height="1200" viewBox="0 0 1536 1200"><path d="M1037 813 V779.5 H1073.5" fill="none" stroke="#a0a0a0" stroke-width="2"/><rect x="1041" y="783" width="36.5" height="34.299999999999955" fill="#fff" stroke="#8a8a8a" stroke-width="2"/><path d="M1049.76 783 V817.3 M1068.74 783 V817.3 M1041 790 H1077.5 M1041 808.3 H1077.5 M1041 812.3 H1077.5" stroke="#c0c0c0" stroke-width="1.5" stroke-dasharray="3 2"/><rect x="1049" y="791.8" width="21.799999999999955" height="10.5" fill="#ebc67e"/></svg>
<div class="t" style="left:1130.02px;transform-origin:0 0;top:197.16px;font-size:31px;line-height:31px;font-weight:700;color:#262626;transform:scaleX(0.9554);-webkit-text-stroke:0.5px #262626;">Highlight Cells Rules</div>
<div class="t" style="left:1131.66px;transform-origin:0 0;top:293.76px;font-size:31px;line-height:31px;font-weight:700;color:#262626;transform:scaleX(1.0114);-webkit-text-stroke:0.5px #262626;">Top/Bottom Rules</div>
<div class="t" style="left:1129.97px;transform-origin:0 0;top:395.56px;font-size:31px;line-height:31px;font-weight:700;color:#262626;transform:scaleX(0.9760);-webkit-text-stroke:0.5px #262626;">Data Bars</div>
<div class="t" style="left:1130.84px;transform-origin:0 0;top:491.26px;font-size:31px;line-height:31px;font-weight:700;color:#262626;transform:scaleX(0.9123);-webkit-text-stroke:0.5px #262626;">Color Scales</div>
<div class="t" style="left:1130.01px;transform-origin:0 0;top:587.16px;font-size:31px;line-height:31px;font-weight:700;color:#262626;transform:scaleX(0.9563);-webkit-text-stroke:0.5px #262626;">Icon Sets</div>
<svg style="left:0;top:0" width="1536" height="1200" viewBox="0 0 1536 1200"><path d="M1450.5 198.4 L1460.5 207.0 L1450.5 215.6 Z" fill="#222"/></svg>
<svg style="left:0;top:0" width="1536" height="1200" viewBox="0 0 1536 1200"><path d="M1450.5 295 L1460.5 303.75 L1450.5 312.5 Z" fill="#222"/></svg>
<svg style="left:0;top:0" width="1536" height="1200" viewBox="0 0 1536 1200"><path d="M1450.5 397 L1460.5 405.5 L1450.5 414 Z" fill="#222"/></svg>
<svg style="left:0;top:0" width="1536" height="1200" viewBox="0 0 1536 1200"><path d="M1450.5 493 L1460.5 501.5 L1450.5 510 Z" fill="#222"/></svg>
<svg style="left:0;top:0" width="1536" height="1200" viewBox="0 0 1536 1200"><path d="M1450.5 589 L1460.5 598.0 L1450.5 607 Z" fill="#222"/></svg>
<svg style="left:0;top:0" width="1536" height="1200" viewBox="0 0 1536 1200"><path d="M1450.5 732 L1460.5 739.5 L1450.5 747 Z" fill="#222"/></svg>
<div style="left:1132px;top:226.3px;width:16px;height:2.5px;background:#555;"></div>
<div style="left:1132px;top:323px;width:13px;height:2.5px;background:#555;"></div>
<div style="left:1132px;top:425px;width:17px;height:2.5px;background:#555;"></div>
<div style="left:1218px;top:520.5px;width:15px;height:2.5px;background:#555;"></div>
<div style="left:1132px;top:616.5px;width:8px;height:2.5px;background:#555;"></div>
<div class="t" style="left:1106.59px;transform-origin:0 0;top:665.03px;font-size:29.5px;line-height:29.5px;font-weight:400;color:#3a3a3a;">New Rule...</div>
<div class="t" style="left:1107.52px;transform-origin:0 0;top:727.03px;font-size:29.5px;line-height:29.5px;font-weight:400;color:#3a3a3a;transform:scaleX(0.9865);">Clear Rules</div>
<div class="t" style="left:1106.60px;transform-origin:0 0;top:789.23px;font-size:29.5px;line-height:29.5px;font-weight:400;color:#3a3a3a;transform:scaleX(0.9918);">Manage Rules...</div>
<div style="left:1109px;top:693px;width:21px;height:2px;background:#555;"></div>
<div style="left:1109px;top:755px;width:17px;height:2px;background:#555;"></div>
<div style="left:1229px;top:817px;width:17px;height:2px;background:#555;"></div>
<div style="left:1023px;top:650px;width:305px;height:58px;border:5px solid #ff0000;box-shadow:3px 3px 4px rgba(0,0,0,.3), inset 4px 4px 5px -2px rgba(0,0,0,.25);"></div>
<div style="left:173px;top:105px;width:64px;height:64px;background:#8b0000;border-radius:50%;"></div>
<div class="t" style="left:173px;top:105px;width:64px;height:64px;line-height:64px;text-align:center;font-size:36px;color:#fff;font-family:'Liberation Sans',sans-serif;font-weight:400;">2</div>
<div style="left:912.5px;top:79px;width:64.0px;height:64px;background:#8b0000;border-radius:50%;"></div>
<div class="t" style="left:912.5px;top:79px;width:64px;height:64px;line-height:64px;text-align:center;font-size:36px;color:#fff;font-family:'Liberation Sans',sans-serif;font-weight:400;">3</div>
<div style="left:168.8px;top:502px;width:64.0px;height:64px;background:#8b0000;border-radius:50%;"></div>
<svg style="left:0;top:0" width="1536" height="1200" viewBox="0 0 1536 1200"><path d="M193 521.4 L197.6 520.3 H202.2 V546.3 H197.2 V525.2 H193 Z" fill="#fff"/></svg>
<div style="left:1349px;top:638px;width:64px;height:64px;background:#8b0000;border-radius:50%;"></div>
<svg style="left:0;top:0" width="1536" height="1200" viewBox="0 0 1536 1200"><path fill-rule="evenodd" d="M1371.3 671.8 L1381.8 656 H1387.2 V671.8 H1389.3 V676.2 H1387.2 V682.3 H1382 V676.2 H1371.3 Z M1376.3 671.8 H1382 V663.2 Z" fill="#fff"/></svg>
</body></html>
